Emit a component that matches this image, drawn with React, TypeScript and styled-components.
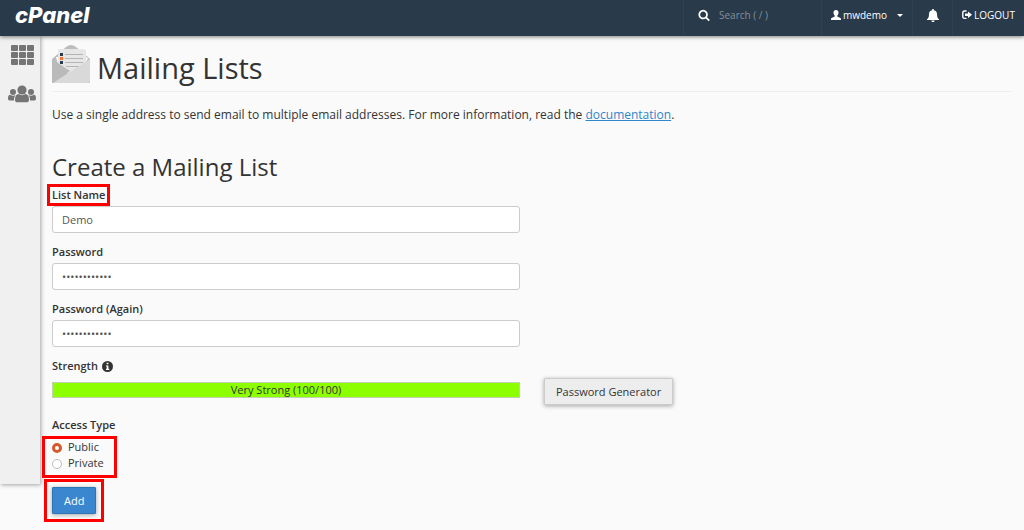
import React from "react";
import styled, { createGlobalStyle } from "styled-components";

const GlobalStyle = createGlobalStyle`
  *, *::before, *::after { box-sizing: border-box; }
  body {
    margin: 0;
    background: #fafafa;
    color: #333;
    font: 12px/16px "Open Sans", sans-serif;
  }
  button, input { font: inherit; }
`;

const Header = styled.header`
  position: relative;
  display: flex;
  height: 36px;
  background: #293a4a;
  box-shadow: 0 1px 4px rgba(0, 0, 0, 0.5);
  color: #fff;
  font-size: 10px;
`;

const Brand = styled.a`
  margin: 0 auto 0 15px;
  color: #fff;
  font-family: Inter, sans-serif;
  font-size: 22px;
  font-style: italic;
  font-weight: 800;
  line-height: 31px;
  text-decoration: none;
`;

const HeaderItem = styled.div<{ $width: number }>`
  display: flex;
  width: ${(p) => p.$width}px;
  padding-bottom: 6px;
  align-items: center;
  justify-content: center;
  border-left: 1px solid #2f4254;
`;

const SearchLabel = styled.label`
  display: flex;
  width: 100%;
  padding-left: 14px;
  align-items: center;
  gap: 9px;
`;

const SearchInput = styled.input`
  width: 96px;
  padding: 0;
  border: 0;
  outline: 0;
  background: transparent;
  color: #fff;
  &::placeholder { color: #84909b; opacity: 1; }
`;

const HeaderButton = styled.button`
  display: flex;
  padding: 0;
  align-items: center;
  gap: 2px;
  border: 0;
  background: none;
  color: #fff;
`;

const HeaderLink = styled.a`
  display: flex;
  align-items: center;
  gap: 2px;
  color: #fff;
  text-decoration: none;
`;

const Caret = styled.span`
  margin-left: 8px;
  border: 3px solid transparent;
  border-top-color: #fff;
  border-bottom: 0;
`;

const Body = styled.div`
  display: flex;
  align-items: flex-start;
`;

const Sidebar = styled.nav`
  display: flex;
  width: 40px;
  min-height: 448px;
  padding: 9px 0 0 4px;
  flex: none;
  flex-direction: column;
  align-items: center;
  gap: 20px;
  background: #f0f0f0;
  box-shadow: 1px 1px 4px rgba(0, 0, 0, 0.35);
`;

const SidebarLink = styled.a`
  display: flex;
  color: #757575;
`;

const Main = styled.main`
  flex: 1;
  padding: 9px 12px 8px;
`;

const PageHeader = styled.div`
  display: flex;
  height: 47px;
  gap: 7px;
  border-bottom: 1px solid #eee;
`;

const Title = styled.h1`
  margin: 0;
  font-size: 29px;
  font-weight: 400;
  line-height: 46px;
`;

const Intro = styled.p`
  margin: 15px 0 30px;
`;

const DocLink = styled.a`
  color: #2f86c9;
  text-decoration: underline;
`;

const SectionTitle = styled.h2`
  margin: 0 0 6px;
  font-size: 24px;
  font-weight: 400;
  line-height: 28px;
`;

const Form = styled.form`
  font-size: 11px;
`;

const Row = styled.div`
  display: grid;
  grid-template-columns: 1fr 1fr;
  column-gap: 24px;
`;

const Field = styled.div`
  display: flex;
  margin-bottom: 11px;
  flex-direction: column;
  align-items: flex-start;
`;

const Label = styled.label`
  display: flex;
  margin-bottom: 3px;
  align-items: center;
  gap: 4px;
  font-weight: 600;
`;

const NameLabel = styled(Label)`
  margin-left: -2px;
  padding: 0 2px;
  outline: 3px solid #fe0000;
`;

const TextInput = styled.input`
  width: 100%;
  height: 27px;
  padding: 0 9px;
  border: 1px solid #ccc;
  border-radius: 3px;
  background: #fff;
  color: #555;
`;

const Meter = styled.div`
  width: 100%;
  height: 16px;
  margin-top: 5px;
  border: 1px solid #c4d0b4;
  background: #8cff00;
  line-height: 14px;
  text-align: center;
`;

const Action = styled.div`
  padding-top: 20px;
`;

const Button = styled.button<{ $primary?: boolean }>`
  height: 27px;
  padding: 0 11px;
  border: 1px solid ${(p) => (p.$primary ? "#2d75b5" : "#ccc")};
  border-radius: 1px;
  background: ${(p) => (p.$primary ? "#3a87cf" : "#ededed")};
  box-shadow: 0 1px 4px rgba(0, 0, 0, 0.35);
  color: ${(p) => (p.$primary ? "#fff" : "#333")};
`;

const AccessGroup = styled.fieldset`
  margin: 8px 0 0;
  padding: 0;
  border: 0;
`;

const Legend = styled.legend`
  margin-bottom: 6px;
  padding: 0;
  font-weight: 600;
`;

const Marked = styled.div`
  width: fit-content;
  outline: 3px solid #fe0000;
`;

const Options = styled(Marked)`
  margin-left: -7px;
  padding: 0 10px 4px 7px;
`;

const Option = styled.label`
  display: flex;
  align-items: center;
  gap: 6px;
`;

const Radio = styled.input`
  width: 10px;
  height: 10px;
  margin: 2px 0 0;
  appearance: none;
  border: 1px solid #bbb;
  border-radius: 50%;
  background: #fff;
  &:checked { border: 3px solid #d35a2c; }
`;

const Submit = styled(Marked)`
  margin: 7px 0 0 -5px;
  padding: 5px;
`;

const GridIcon = () => (
  <svg width="23" height="20" viewBox="0 0 23 20" fill="currentColor" aria-hidden="true">
    {[0, 7, 14].map((y) => [0, 8, 16].map((x) => <rect key={`${x}-${y}`} x={x} y={y} width="7" height="6" rx="1" />))}
  </svg>
);

const UsersIcon = () => (
  <svg width="28" height="18" viewBox="0 0 28 18" fill="currentColor" aria-hidden="true">
    <circle cx="14" cy="5" r="4.6" />
    <circle cx="5" cy="7" r="3" />
    <circle cx="23" cy="7" r="3" />
    <path d="M7 15c0-4 1.300-6 3.500-6 2.200 1.500 4.800 1.500 7 0C19.700 9 21 11 21 15c0 1.500-1 2.300-2.300 2.300H9.300C8 17.300 7 16.500 7 15z" />
    <path d="M0 13.500C0 11 .8 9.800 2 9.800c1.800 1.100 4 1.200 5.700.3C6.400 11.500 6 13 6 15.500H2C.8 15.500 0 14.900 0 13.500zM28 13.500c0-2.500-.8-3.700-2-3.700-1.800 1.100-4 1.200-5.700.3C21.600 11.500 22 13 22 15.500h4c1.200 0 2-.6 2-2z" />
  </svg>
);

const MailIcon = () => (
  <svg width="38" height="38" viewBox="0 0 38 38" aria-hidden="true">
    <path d="M0 14 14 2q5-4 10 0l14 12v24H0z" fill="#bdbdbd" />
    <path d="M4 12h2v7zM34 12l2 1-2 4z" fill="#fff" />
    <path d="M6 5.500Q6 4 7.500 4h23Q34 4 34 6V22L19 31 6 22z" fill="#e6e6e6" />
    <path d="M13 9.500h18M13 13.500h18M13 17.500h18M14 21.500h14" stroke="#b5b5b5" />
    <path d="M8 8h3v3H8zM8 16h3v3H8z" fill="#293a4a" />
    <path d="M8 12h3v3H8z" fill="#ff6c2c" />
    <path d="M0 14 18 26 1 38H0z" fill="#bababa" />
    <path d="M38 14v22q0 2-2 2H1z" fill="#d9d9d9" />
  </svg>
);

const SearchIcon = () => (
  <svg width="12" height="12" viewBox="0 0 1792 1792" fill="currentColor" aria-hidden="true">
    <path d="M1216 832q0-185-131.500-316.500t-316.500-131.500-316.500 131.500-131.500 316.500 131.500 316.500 316.500 131.500 316.500-131.500 131.500-316.500zm512 832q0 52-38 90t-90 38q-54 0-90-38l-343-342q-179 124-399 124-143 0-273.500-55.500t-225-150-150-225-55.500-273.500 55.500-273.500 150-225 225-150 273.500-55.500 273.500 55.500 225 150 150 225 55.500 273.500q0 220-124 399l343 343q37 37 37 90z" />
  </svg>
);

const UserIcon = () => (
  <svg width="10" height="10" viewBox="0 0 10 10" fill="currentColor" aria-hidden="true">
    <path d="M5 0c1.700 0 2.500 1.100 2.500 2.600 0 1.300-.5 2.300-1.200 3v.9L9.500 8q.5.3.5 1v1H0V9q0-.7.5-1l3.200-1.500v-.9c-.7-.7-1.200-1.700-1.200-3C2.500 1.100 3.300 0 5 0z" />
  </svg>
);

const BellIcon = () => (
  <svg width="12" height="13" viewBox="0 0 12 13" fill="currentColor" aria-hidden="true">
    <path d="M5.200 0h1.600v1.200C9 1.500 10 3.200 10 5c0 3 .7 4.300 2 5.200v.8H0v-.8C1.300 9.300 2 8 2 5c0-1.800 1-3.500 3.200-3.800zM4.400 11.500h3.200C7.500 12.500 7 13 6 13s-1.500-.5-1.600-1.500z" />
  </svg>
);

const LogoutIcon = () => (
  <svg width="10" height="10" viewBox="0 0 10 10" aria-hidden="true">
    <path d="M4.500 1H2.500Q.8 1 .8 2.700v4Q.8 8.400 2.500 8.400h2" fill="none" stroke="currentColor" strokeWidth="1.400" />
    <path d="M3 3.500h3V1.500l4 3.200-4 3.200V6H3z" fill="currentColor" />
  </svg>
);

const InfoIcon = () => (
  <svg width="11" height="11" viewBox="0 0 11 11" aria-hidden="true">
    <circle cx="5.500" cy="5.500" r="5.500" fill="#333" />
    <path d="M4.600 1.700h1.800v1.600H4.600zM3.900 4.400h2.500v3.400h.9V9H3.900V7.800h.8V5.500h-.8z" fill="#fff" />
  </svg>
);

export default function App() {
  return (
    <>
      <GlobalStyle />
      <Header>
        <Brand href="#">cPanel</Brand>
        <HeaderItem $width={138}>
          <SearchLabel aria-label="Search">
            <SearchIcon />
            <SearchInput type="search" placeholder="Search ( / )" />
          </SearchLabel>
        </HeaderItem>
        <HeaderItem $width={91}>
          <HeaderButton type="button"><UserIcon /> mwdemo <Caret /></HeaderButton>
        </HeaderItem>
        <HeaderItem $width={40}>
          <HeaderButton type="button" aria-label="Notifications"><BellIcon /></HeaderButton>
        </HeaderItem>
        <HeaderItem $width={72}>
          <HeaderLink href="#"><LogoutIcon /> LOGOUT</HeaderLink>
        </HeaderItem>
      </Header>
      <Body>
        <Sidebar>
          <SidebarLink href="#" aria-label="Home"><GridIcon /></SidebarLink>
          <SidebarLink href="#" aria-label="Users"><UsersIcon /></SidebarLink>
        </Sidebar>
        <Main>
          <PageHeader>
            <MailIcon />
            <Title>Mailing Lists</Title>
          </PageHeader>
          <Intro>
            Use a single address to send email to multiple email addresses. For more information, read the{" "}
            <DocLink href="#">documentation</DocLink>.
          </Intro>
          <SectionTitle>Create a Mailing List</SectionTitle>
          <Form onSubmit={(e) => e.preventDefault()}>
            <Row>
              <Field>
                <NameLabel htmlFor="name">List Name</NameLabel>
                <TextInput id="name" defaultValue="Demo" />
              </Field>
            </Row>
            <Row>
              <Field>
                <Label htmlFor="password">Password</Label>
                <TextInput id="password" type="password" defaultValue="abcdefghijkl" />
              </Field>
            </Row>
            <Row>
              <Field>
                <Label htmlFor="again">Password (Again)</Label>
                <TextInput id="again" type="password" defaultValue="abcdefghijkl" />
              </Field>
            </Row>
            <Row>
              <Field>
                <Label as="div">Strength <InfoIcon /></Label>
                <Meter>Very Strong (100/100)</Meter>
              </Field>
              <Action>
                <Button type="button">Password Generator</Button>
              </Action>
            </Row>
            <AccessGroup>
              <Legend>Access Type</Legend>
              <Options>
                <Option><Radio type="radio" name="access" defaultChecked /> Public</Option>
                <Option><Radio type="radio" name="access" /> Private</Option>
              </Options>
            </AccessGroup>
            <Submit>
              <Button $primary type="submit">Add</Button>
            </Submit>
          </Form>
        </Main>
      </Body>
    </>
  );
}
